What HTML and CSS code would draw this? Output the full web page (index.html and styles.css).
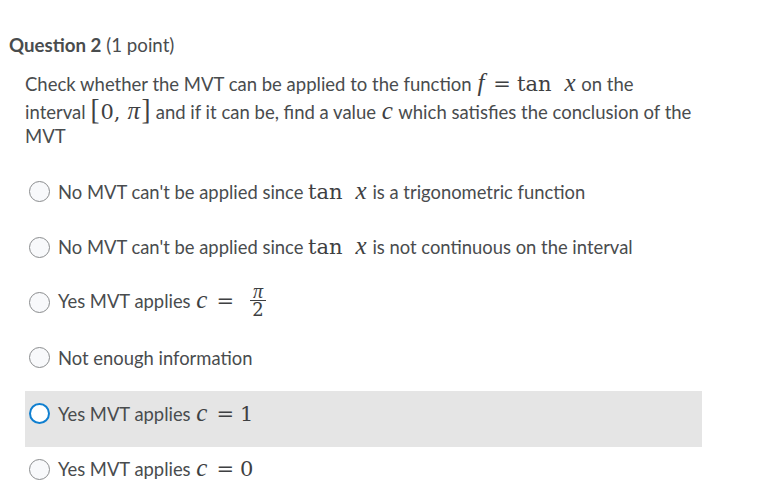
FILE: index.html
```html
<!DOCTYPE html>
<html>
<head>
<meta charset="utf-8">
<link rel="stylesheet" href="styles.css">
</head>
<body>
<div class="page">
  <h2 class="qtitle"><b>Question 2</b> <span class="pts">(1 point)</span></h2>
  <div class="qbody">
    <p class="prompt">Check whether the MVT can be applied to the function <span class="m"><i>f</i><span class="op">=</span>tan<span class="sp"></span><i>x</i></span> on the interval <span class="m"><span class="br">[</span>0,<span class="thin"></span><i>π</i><span class="br">]</span></span> and if it can be, find a value <span class="m"><i>c</i></span> which satisfies the conclusion of the MVT</p>
    <ul class="opts">
      <li class="opt"><span class="radio"></span><span class="lbl">No MVT can't be applied since <span class="m">tan<span class="sp"></span><i>x</i></span> is a trigonometric function</span></li>
      <li class="opt"><span class="radio"></span><span class="lbl">No MVT can't be applied since <span class="m">tan<span class="sp"></span><i>x</i></span> is not continuous on the interval</span></li>
      <li class="opt"><span class="radio"></span><span class="lbl">Yes MVT applies <span class="m"><i>c</i><span class="op">=</span><span class="frac"><span class="num"><i>π</i></span><span class="den">2</span></span></span></span></li>
      <li class="opt"><span class="radio"></span><span class="lbl">Not enough information</span></li>
      <li class="opt hover"><span class="radio focus"></span><span class="lbl">Yes MVT applies <span class="m"><i>c</i><span class="op">=</span>1</span></span></li>
      <li class="opt"><span class="radio"></span><span class="lbl">Yes MVT applies <span class="m"><i>c</i><span class="op">=</span>0</span></span></li>
    </ul>
  </div>
</div>
</body>
</html>
```
FILE: styles.css
```css
* { box-sizing: border-box; }
body {
  margin: 0;
  background: #fff;
  font-family: Lato, "Open Sans", sans-serif;
  color: #494c4e;
}
.page { padding: 33px 0 0 9px; }
.qtitle {
  margin: 0;
  font-size: 18.7px;
  font-weight: normal;
  line-height: 24px;
}
.qtitle b { font-weight: 700; }
.qbody { padding: 0 0 0 16px; width: 693px; }
.prompt {
  margin: 15px 0 0 0;
  font-size: 18.5px;
  line-height: 24px;
  width: 670px;
}
.m {
  font-family: "DejaVu Serif", "Liberation Serif", serif;
  font-size: 21px;
  line-height: 20px;
  color: #3e4042;
  white-space: nowrap;
}
.m i {
  font-family: "Liberation Serif", serif;
  font-style: italic;
  font-size: 25px;
  line-height: 20px;
  padding: 0 1px;
}
.op { padding: 0 6px 0 8px; }
.sp { display: inline-block; width: 12px; }
.thin { display: inline-block; width: 6px; }
.br {
  font-family: "Liberation Serif", serif;
  font-size: 30px;
  line-height: 25px;
  display: inline-block;
  transform: scaleX(0.9);
}
.opts { list-style: none; margin: 21px 0 0 0; padding: 0; }
.opt {
  display: flex;
  align-items: center;
  height: 55.4px;
  padding: 0 0 10px 4px;
  font-size: 18.4px;
}
.opt.hover { background: #e5e5e5; height: 56px; }
.radio {
  width: 21px;
  height: 21px;
  border-radius: 50%;
  border: 1px solid #8a8c8e;
  background: #f8f9fb;
  margin-right: 8px;
  flex: none;
}
.radio.focus { border: 2px solid #0f7fd0; background: #fff; }
.frac {
  display: inline-flex;
  flex-direction: column;
  align-items: center;
  vertical-align: middle;
  font-size: 18px;
  line-height: 17px;
  margin-left: 10px;
  position: relative;
  top: -2px;
}
.frac .num { border-bottom: 1px solid #3e4042; padding: 0 2px; }
.frac .num i { font-size: 20px; line-height: 16px; }
```
